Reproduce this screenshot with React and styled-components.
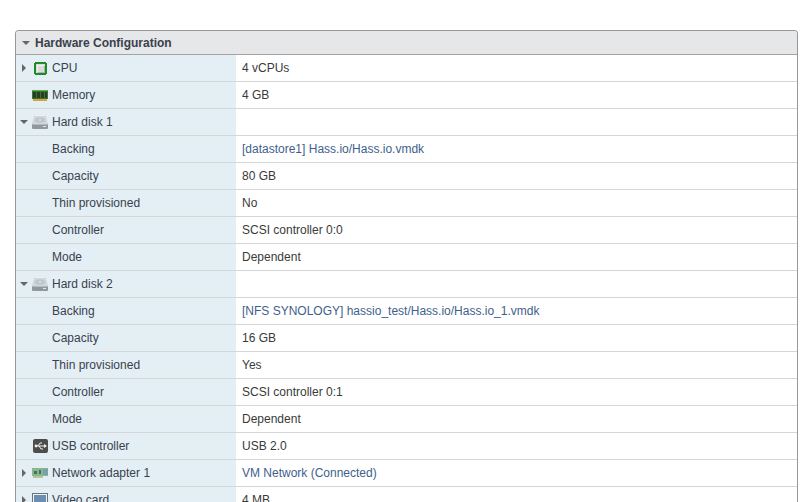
import React from "react";
import styled, { createGlobalStyle } from "styled-components";

const GlobalStyle = createGlobalStyle`
  html, body {
    margin: 0;
    height: 100%;
    overflow: hidden;
    background: #fff;
  }
  body {
    font-family: "Liberation Sans", Arial, sans-serif;
    font-size: 12px;
    color: #333;
  }
`;

const Page = styled.div`
  height: 502px;
  overflow: hidden;
  padding: 30px 14px 0 15px;
`;

const Panel = styled.div`
  border: 1px solid #979797;
  border-bottom: 0;
  border-radius: 4px 4px 0 0;
`;

const PanelHeader = styled.div`
  display: flex;
  align-items: center;
  height: 23px;
  border-bottom: 1px solid #a3a3a3;
  border-radius: 3px 3px 0 0;
  background: #e6e7e8;
  font-weight: bold;
  color: #39414d;
`;

const Row = styled.div`
  display: grid;
  grid-template-columns: 220px 1fr;
  height: 27px;
`;

const Label = styled.div`
  display: flex;
  align-items: center;
  box-sizing: border-box;
  padding-left: ${(props) => (props.$detail ? "36px" : "0")};
  border-bottom: 1px solid #d4d6d7;
  background: #e4eff5;
  color: #39414d;
`;

const Value = styled.div`
  display: flex;
  align-items: center;
  padding-left: 6px;
  border-bottom: 1px solid #d4d6d7;
  color: ${(props) => (props.$link ? "#3e5f8c" : "#3a3a3a")};
`;

const ArrowSlot = styled.span`
  display: flex;
  justify-content: center;
  align-items: center;
  flex: none;
  width: 16px;
`;

const HeaderArrowSlot = styled(ArrowSlot)`
  width: 13px;
  padding-left: 3px;
`;

const OpenArrow = styled.span`
  width: 0;
  height: 0;
  border-left: 4px solid transparent;
  border-right: 4px solid transparent;
  border-top: 4px solid #666;
`;

const ClosedArrow = styled.span`
  width: 0;
  height: 0;
  border-top: 4px solid transparent;
  border-bottom: 4px solid transparent;
  border-left: 4px solid #666;
`;

const HeaderTitle = styled.span`
  margin-left: 3px;
`;

const IconSlot = styled.span`
  display: flex;
  justify-content: center;
  align-items: center;
  flex: none;
  width: 16px;
  height: 16px;
  margin-right: 4px;
`;

const CpuIcon = () => (
  <svg width="13" height="13" viewBox="0 0 13 13">
    <path d="M1 0h11v1h1v11h-1v1H1v-1H0V1h1z" fill="#1f8a2b" />
    <rect x="2" y="2" width="9" height="9" fill="#d9dcd8" />
    <path d="M3 3h7v1H4v6H3z" fill="#f1f2ef" />
    <path d="M10 4v6H4v1h7V4z" fill="#aeb3ad" />
  </svg>
);

const MemoryIcon = () => (
  <svg width="16" height="11" viewBox="0 0 16 11">
    <rect y="0" width="16" height="9" fill="#2f7d2a" />
    <rect x="0" y="0" width="16" height="1" fill="#5fa84c" />
    <rect x="1" y="2" width="3" height="6" fill="#2c3a2a" />
    <rect x="5" y="2" width="3" height="6" fill="#2c3a2a" />
    <rect x="9" y="2" width="3" height="6" fill="#2c3a2a" />
    <rect x="13" y="2" width="2" height="6" fill="#2c3a2a" />
    <rect x="1" y="9" width="14" height="2" fill="#d9a23b" />
  </svg>
);

const DiskIcon = () => (
  <svg width="16" height="14" viewBox="0 0 16 14">
    <path d="M2.5 0h11L16 9H0z" fill="#d0d7db" />
    <path d="M3 .5h10" stroke="#eef2f4" />
    <ellipse cx="8" cy="5" rx="5" ry="2.6" fill="#bcc5ca" />
    <ellipse cx="8" cy="5" rx="1.5" ry="0.8" fill="#e3e8ea" />
    <rect y="9" width="16" height="5" rx="1" fill="#8f999f" />
    <rect x="1" y="9" width="14" height="1" fill="#b3bcc1" />
    <rect x="11" y="11" width="3" height="1" fill="#dfe5e8" />
  </svg>
);

const UsbIcon = () => (
  <svg width="15" height="14" viewBox="0 0 15 14">
    <rect width="15" height="14" rx="2" fill="#4d4d4d" />
    <path d="M3 7h9M5 7l2-3h2M6 7l2 3h2" fill="none" stroke="#f2f2f2" />
    <path d="M11 5l3 2-3 2z" fill="#f2f2f2" />
    <circle cx="3" cy="7" r="1.4" fill="#f2f2f2" />
  </svg>
);

const NetworkIcon = () => (
  <svg width="16" height="10" viewBox="0 0 16 10">
    <rect width="16" height="8" fill="#86b793" />
    <rect x="2" y="3" width="3" height="3" fill="#4a6f56" />
    <rect x="7" y="2" width="2" height="4" fill="#4a6f56" />
    <rect x="11" y="1" width="5" height="6" fill="#7d9eaa" />
    <rect x="1" y="8" width="10" height="2" fill="#b8c39a" />
  </svg>
);

const VideoIcon = () => (
  <svg width="16" height="15" viewBox="0 0 16 15">
    <rect x="0.5" y="0.5" width="15" height="14" fill="#eef2f5" stroke="#69747d" />
    <rect x="2" y="2" width="12" height="11" fill="#6a8fb3" />
  </svg>
);

const icons = {
  cpu: CpuIcon,
  memory: MemoryIcon,
  disk: DiskIcon,
  usb: UsbIcon,
  network: NetworkIcon,
  video: VideoIcon,
};

const rows = [
  { label: "CPU", value: "4 vCPUs", icon: "cpu", arrow: "closed" },
  { label: "Memory", value: "4 GB", icon: "memory" },
  { label: "Hard disk 1", value: "", icon: "disk", arrow: "open" },
  { label: "Backing", value: "[datastore1] Hass.io/Hass.io.vmdk", link: true },
  { label: "Capacity", value: "80 GB" },
  { label: "Thin provisioned", value: "No" },
  { label: "Controller", value: "SCSI controller 0:0" },
  { label: "Mode", value: "Dependent" },
  { label: "Hard disk 2", value: "", icon: "disk", arrow: "open" },
  { label: "Backing", value: "[NFS SYNOLOGY] hassio_test/Hass.io/Hass.io_1.vmdk", link: true },
  { label: "Capacity", value: "16 GB" },
  { label: "Thin provisioned", value: "Yes" },
  { label: "Controller", value: "SCSI controller 0:1" },
  { label: "Mode", value: "Dependent" },
  { label: "USB controller", value: "USB 2.0", icon: "usb" },
  { label: "Network adapter 1", value: "VM Network (Connected)", icon: "network", arrow: "closed", link: true },
  { label: "Video card", value: "4 MB", icon: "video", arrow: "closed" },
];

const HardwareRow = ({ row }) => {
  const Icon = icons[row.icon];
  return (
    <Row>
      <Label $detail={!Icon}>
        {Icon && (
          <>
            <ArrowSlot>
              {row.arrow === "open" && <OpenArrow />}
              {row.arrow === "closed" && <ClosedArrow />}
            </ArrowSlot>
            <IconSlot>
              <Icon />
            </IconSlot>
          </>
        )}
        {row.label}
      </Label>
      <Value $link={row.link}>{row.value}</Value>
    </Row>
  );
};

const App = () => (
  <Page>
    <GlobalStyle />
    <Panel>
      <PanelHeader>
        <HeaderArrowSlot>
          <OpenArrow />
        </HeaderArrowSlot>
        <HeaderTitle>Hardware Configuration</HeaderTitle>
      </PanelHeader>
      {rows.map((row, i) => (
        <HardwareRow key={i} row={row} />
      ))}
    </Panel>
  </Page>
);

export default App;
